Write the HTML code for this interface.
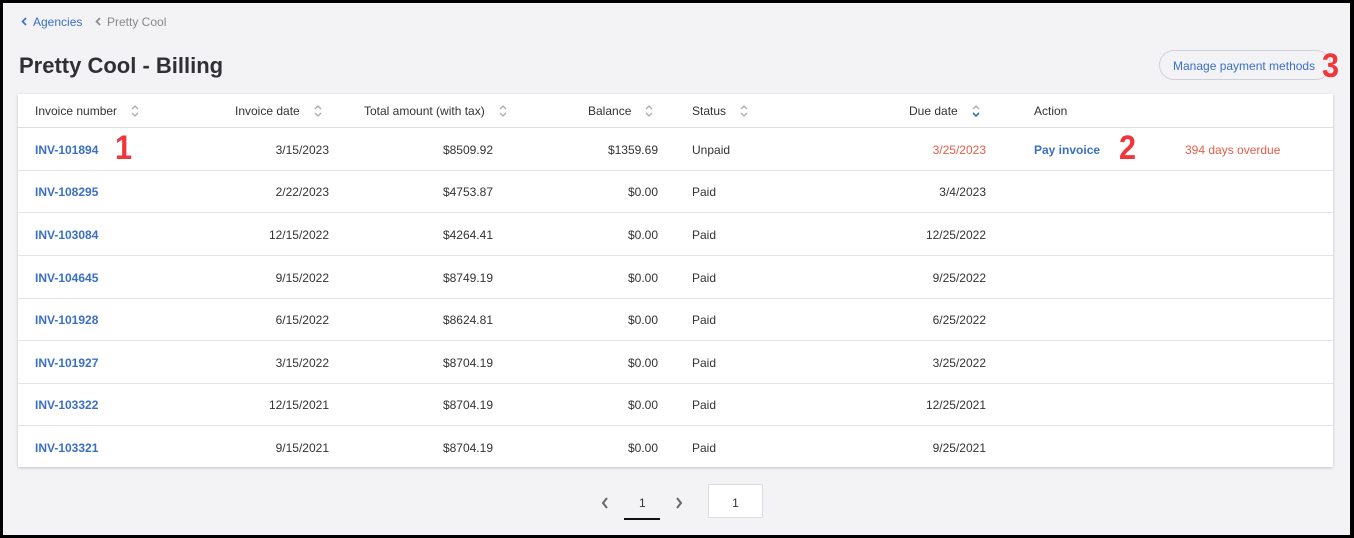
<!DOCTYPE html>
<html><head><style>
*{box-sizing:border-box;margin:0;padding:0}
body{width:1354px;height:538px;background:#000;font-family:"Liberation Sans",sans-serif;overflow:hidden;position:relative}
.pg{position:absolute;left:3px;top:3px;width:1347px;height:532px;background:#f3f3f6}
.abs{position:absolute;white-space:nowrap}
.bc{top:12px;font-size:12px}
h1{position:absolute;left:16px;top:50px;font-size:22px;font-weight:bold;color:#2f3033}
.btn{left:1156px;top:47px;width:172px;height:30px;border:1px solid #d0d0d8;border-radius:15px;font-size:12px;color:#3a6fc4;padding:8px 0 0 13px}
.card{position:absolute;left:15px;top:91px;width:1315px;height:373px;background:#fff;box-shadow:0 1px 3px rgba(0,0,0,.2)}
.hd{position:absolute;top:0;left:0;width:100%;height:34px;border-bottom:1px solid #ddd}
.row{position:absolute;left:0;width:100%;height:43px;border-bottom:1px solid #e4e4e8;font-size:12px;color:#333}
.c{position:absolute;top:15px;white-space:nowrap}
.r{text-align:right}
.h{font-size:12px;color:#333;top:10px;position:absolute;white-space:nowrap}
.si{display:inline-block;margin-left:14px;vertical-align:-2px}
.lnk{color:#3a6fc4;font-weight:bold}
.red{color:#e35d4a}
.num{position:absolute;color:#f0363a;font-weight:bold;font-size:34px;transform:scaleX(.9)}
</style></head><body><div class="pg">
<div class="abs bc" style="left:18px;color:#3a6fc4"><svg width="6" height="9" style="margin-right:6px"><path d="M5 1L1.5 4.5L5 8" fill="none" stroke="#3a6fc4" stroke-width="1.6"/></svg>Agencies</div>
<div class="abs bc" style="left:92px;color:#888"><svg width="6" height="9" style="margin-right:6px"><path d="M5 1L1.5 4.5L5 8" fill="none" stroke="#888" stroke-width="1.6"/></svg>Pretty Cool</div>
<h1>Pretty Cool - Billing</h1>
<div class="abs btn">Manage payment methods</div>
<div class="num" style="left:1318px;top:44px">3</div>
<div class="card">
<div class="hd">
<div class="h" style="left:17px">Invoice number<svg class="si" width="8" height="12"><path d="M1 4L4 1L7 4M1 8L4 11L7 8" fill="none" stroke="#aaa" stroke-width="1.3"/></svg></div>
<div class="h" style="left:217px">Invoice date<svg class="si" width="8" height="12"><path d="M1 4L4 1L7 4M1 8L4 11L7 8" fill="none" stroke="#aaa" stroke-width="1.3"/></svg></div>
<div class="h" style="left:346px">Total amount (with tax)<svg class="si" width="8" height="12"><path d="M1 4L4 1L7 4M1 8L4 11L7 8" fill="none" stroke="#aaa" stroke-width="1.3"/></svg></div>
<div class="h" style="left:570px">Balance<svg class="si" width="8" height="12"><path d="M1 4L4 1L7 4M1 8L4 11L7 8" fill="none" stroke="#aaa" stroke-width="1.3"/></svg></div>
<div class="h" style="left:674px">Status<svg class="si" width="8" height="12"><path d="M1 4L4 1L7 4M1 8L4 11L7 8" fill="none" stroke="#aaa" stroke-width="1.3"/></svg></div>
<div class="h" style="left:891px">Due date<svg class="si" width="8" height="12"><path d="M1 4L4 1L7 4" fill="none" stroke="#aaa" stroke-width="1.3"/><path d="M1 8L4 11L7 8" fill="none" stroke="#3a6fc4" stroke-width="1.6"/></svg></div>
<div class="h" style="left:1016px">Action</div>
</div>
<div id="rows"></div>
<div class="num" style="left:96px;top:35px">1</div>
<div class="num" style="left:1100px;top:35px">2</div>
</div>
<svg class="abs" style="left:598px;top:494px" width="8" height="12"><path d="M6 1L2 6L6 11" fill="none" stroke="#666" stroke-width="2"/></svg>
<div class="abs" style="left:636px;top:493px;font-size:12px;color:#333">1</div>
<div class="abs" style="left:621px;top:515px;width:36px;height:2px;background:#111"></div>
<svg class="abs" style="left:672px;top:494px" width="8" height="12"><path d="M2 1L6 6L2 11" fill="none" stroke="#666" stroke-width="2"/></svg>
<div class="abs" style="left:705px;top:481px;width:55px;height:34px;background:#fff;border:1px solid #ddd;font-size:12px;text-align:center;padding-top:11px;color:#333">1</div>
</div>
<script>
var d=[["INV-101894","3/15/2023","$8509.92","$1359.69","Unpaid","3/25/2023"],
["INV-108295","2/22/2023","$4753.87","$0.00","Paid","3/4/2023"],
["INV-103084","12/15/2022","$4264.41","$0.00","Paid","12/25/2022"],
["INV-104645","9/15/2022","$8749.19","$0.00","Paid","9/25/2022"],
["INV-101928","6/15/2022","$8624.81","$0.00","Paid","6/25/2022"],
["INV-101927","3/15/2022","$8704.19","$0.00","Paid","3/25/2022"],
["INV-103322","12/15/2021","$8704.19","$0.00","Paid","12/25/2021"],
["INV-103321","9/15/2021","$8704.19","$0.00","Paid","9/25/2021"]];
var h="",tops=[34,76,119,162,204,247,289,332];
d.forEach(function(r,i){
h+='<div class="row" style="top:'+tops[i]+'px;'+(i==7?'border:none':'')+'">'+
'<div class="c lnk" style="left:17px">'+r[0]+'</div>'+
'<div class="c r" style="right:1004px">'+r[1]+'</div>'+
'<div class="c r" style="right:840px">'+r[2]+'</div>'+
'<div class="c r" style="right:675px">'+r[3]+'</div>'+
'<div class="c" style="left:674px">'+r[4]+'</div>'+
'<div class="c r'+(i==0?' red':'')+'" style="right:347px">'+r[5]+'</div>'+
(i==0?'<div class="c lnk" style="left:1016px">Pay invoice</div><div class="c red" style="left:1167px">394 days overdue</div>':'')+
'</div>';});
document.getElementById('rows').innerHTML=h;
</script>
</body></html>
